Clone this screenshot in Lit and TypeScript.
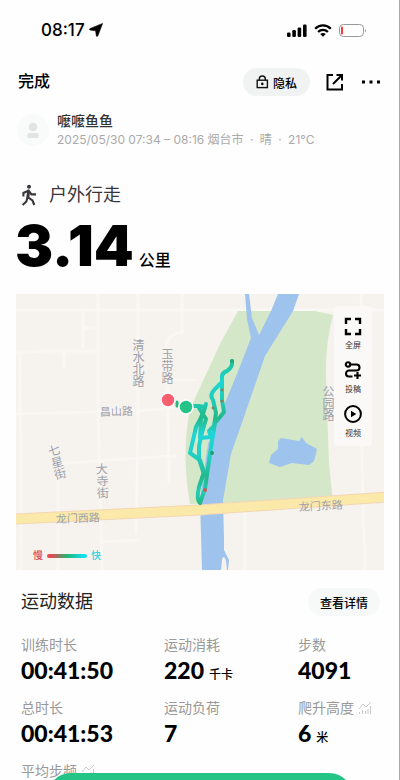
import { LitElement, html, svg, css } from "lit";
import { customElement, property } from "lit/decorators.js";

interface Metric {
  label: string;
  value?: string;
  unit?: string;
  chart?: boolean;
}

const METRICS: Metric[] = [
  { label: "训练时长", value: "00:41:50" },
  { label: "运动消耗", value: "220", unit: "千卡" },
  { label: "步数", value: "4091" },
  { label: "总时长", value: "00:41:53" },
  { label: "运动负荷", value: "7" },
  { label: "爬升高度", value: "6", unit: "米", chart: true },
  { label: "平均步频", chart: true },
];

const SANS = css`"Liberation Sans", "Noto Sans CJK SC", sans-serif`;

@customElement("status-bar")
export class StatusBar extends LitElement {
  static styles = css`
    :host {
      display: flex;
      align-items: center;
      justify-content: space-between;
      height: 60px;
      padding: 0 32px 0 41px;
      font: 500 17px/20px Inter, sans-serif;
      color: #000;
    }
    .side {
      display: flex;
      align-items: center;
      gap: 4px;
    }
    .icons {
      gap: 7px;
    }
    svg {
      display: block;
    }
  `;
  render() {
    return html`
      <div class="side">
        <span>08:17</span>
        <svg width="14" height="14" viewBox="0 0 14 14" aria-hidden="true">
          <path d="M13.6 .4 L8.8 13 Q8.1 14 7.4 13 L6.6 7.8 L1 7 Q-.2 6.4 .8 5.7 Z" stroke="#000" stroke-width=".6" stroke-linejoin="round" />
        </svg>
      </div>
      <div class="side icons">
        <svg width="20" height="13" viewBox="0 0 20 13" aria-hidden="true">
          <rect x="0" y="8.5" width="3.6" height="4.5" rx="1.2" />
          <rect x="5.3" y="6" width="3.6" height="7" rx="1.2" />
          <rect x="10.6" y="3.5" width="3.6" height="9.5" rx="1.2" />
          <rect x="16" y=".5" width="3.6" height="12.5" rx="1.2" />
        </svg>
        <svg width="18" height="13" viewBox="0 0 18 13" aria-hidden="true">
          <g fill="none" stroke="#000" stroke-width="2.3">
            <path d="M1.2 4.8 C5.6 .3 12.4 .3 16.8 4.8" />
            <path d="M4.1 8 C6.9 5.2 11.1 5.2 13.9 8" />
          </g>
          <path d="M9 12.8 L6.2 10 Q9 7.8 11.8 10 Z" />
        </svg>
        <svg width="28" height="13" viewBox="0 0 28 13" aria-hidden="true">
          <rect x=".5" y=".5" width="24" height="12" rx="3.8" fill="none" stroke="#999" />
          <rect x="2" y="2.5" width="2" height="8" rx="1" fill="#f23a3c" />
          <path d="M26 4.5 Q27.8 6.5 26 8.5 Z" fill="#999" />
        </svg>
      </div>
    `;
  }
}

@customElement("route-map")
export class RouteMap extends LitElement {
  static styles = css`
    :host {
      display: block;
      position: relative;
      background: #f6f2ed;
    }
    .map {
      display: block;
      width: 100%;
      height: auto;
    }
    .minor {
      fill: none;
      stroke: #f9f7f3;
      stroke-width: 3;
    }
    .water {
      fill: #9ec3ec;
    }
    .park {
      fill: #d5e7c9;
    }
    .place {
      font: 400 11px ${SANS};
      fill: #9da1ab;
    }
    .column {
      writing-mode: vertical-rl;
      font-size: 12px;
    }
    .track {
      fill: none;
      stroke-width: 4;
      stroke-linecap: round;
      stroke-linejoin: round;
    }
    .tools {
      position: absolute;
      top: 12px;
      right: 12px;
      width: 38px;
      padding: 10px 0 6px;
      border-radius: 4px;
      background: #fbf9f7;
      display: flex;
      flex-direction: column;
      gap: 8px;
    }
    .tool {
      display: flex;
      flex-direction: column;
      align-items: center;
      gap: 4px;
      padding: 0;
      border: 0;
      background: none;
      color: #333;
      font: 400 8px/12px ${SANS};
      height: 36px;
    }
    .legend {
      position: absolute;
      left: 17px;
      bottom: 6px;
      display: flex;
      align-items: center;
      gap: 4px;
      font: 500 10px/16px ${SANS};
    }
    .slow {
      color: #d9474f;
    }
    .fast {
      color: #35d3e0;
    }
    .scale {
      width: 40px;
      height: 4px;
      border-radius: 2px;
      background: linear-gradient(90deg, #e8484f 10%, #22b573 50%, #16e0f0 90%);
    }
  `;
  render() {
    return html`
      <svg class="map" viewBox="0 0 368 276" role="img" aria-label="运动轨迹地图">
        <defs>
          <linearGradient id="pace" gradientUnits="userSpaceOnUse" x1="0" y1="66" x2="0" y2="210">
            <stop offset="0" stop-color="#22bf92" />
            <stop offset=".15" stop-color="#1dd6d2" />
            <stop offset=".3" stop-color="#20c9b4" />
            <stop offset=".4" stop-color="#22b98a" />
            <stop offset=".52" stop-color="#20d5d8" />
            <stop offset=".66" stop-color="#22cfc4" />
            <stop offset=".82" stop-color="#22b98a" />
            <stop offset=".92" stop-color="#20cdb8" />
            <stop offset="1" stop-color="#22b77c" />
          </linearGradient>
        </defs>
        ${svg`
        <rect width="368" height="276" fill="#f6f2ed" />
        <g class="minor">
          <path d="M0 16 H368" />
          <path d="M67 16 V54 M67 34 H82 M0 59 L28 57 H82 M48 57 V74" />
          <path d="M82 0 V118 L86 276" />
          <path d="M122 0 V130 L120 240" />
          <path d="M166 0 V38 Q152 40 151 50 L153 190" />
          <path d="M0 120 L120 117 L180 112 M40 170 L122 164 L160 162" />
          <path d="M4 60 L5 276 M42 165 V276 M86 248 L124 246" />
          <path d="M229 210 V276 M345 0 L346 170 L349 276" />
          <path d="M150 86 H180" />
        </g>
        <path class="park" d="M222 17 L299 17 L317 21 Q309 50 310 85 L313 170 L317 208 L174 210 Q165 160 174 115 L205 48 Z" />
        <path class="water" d="M229 0 L233 0 L236 24 L243 41 L255 17 L262 0 L283 0 L277 17 L249 62 L229 120 L215 160 L207 206 L208 244 L208 256 L213 266 L212 276 L186 276 L184 205 L192 150 L221 80 L235 44 L231 25 Z" />
        <path class="water" d="M262 147 L265 144 L283 147 L286 143 L290 149 L301 155 L298 167 L293 171 L276 169 L264 173 L253 169 L255 161 L262 155 Z" />
        <path d="M205 276 L206 265 Q208 260 210 267 L211 276 Z" fill="#f6f2ed" />
        <path d="M-2 225 L184 216 L370 203" fill="none" stroke="#f3d6b4" stroke-width="11" />
        <path d="M-2 225 L184 216 L370 203" fill="none" stroke="#fae9a9" stroke-width="9" />
        <g class="place">
          <text class="column" x="121" y="45">清水北路</text>
          <text class="column" x="150" y="54">玉带路</text>
          <text class="column" x="311" y="91">公园路</text>
          <text class="column" x="84" y="169" transform="rotate(-3 84 169)">大寺街</text>
          <text class="column" x="35" y="151" transform="rotate(-15 35 151)">七星街</text>
          <text x="84" y="122" transform="rotate(-2 84 122)">昌山路</text>
          <text x="40" y="229" transform="rotate(-2 40 229)">龙门西路</text>
          <text x="283" y="217" transform="rotate(-3 283 217)">龙门东路</text>
        </g>
        <g class="track" stroke="url(#pace)">
          <path d="M216 67 Q217 73 211 77 Q205 79 206 85 L206 106 L208 118 L199 129 L194 160 L189 195 L184 209 Q180 206 183 193 L188 178 L184 166 L174 159 L180 133 L187 120 L190 110" />
          <path d="M206 88 L199 95 Q193 101 197 106 L200 119 L198 132 L193 137 L195 143 L184 144 L185 124 L189 113 L183 112 L172 112" />
          <path d="M183 114 L190 125 L186 139 L183 152 L183 165 L188 180" />
        </g>
        <g fill="#d45b50">
          <circle cx="189" cy="196" r="2" />
          <circle cx="206" cy="107" r="1.6" fill="#8c7f54" />
          <circle cx="206" cy="96" r="1.4" fill="#8c7f54" />
          <circle cx="197" cy="114" r="1.4" fill="#8c7f54" />
          <circle cx="196" cy="159" r="2" fill="#1f9f70" />
          <circle cx="216" cy="67" r="2" fill="#22a77a" />
        </g>
        <path d="M161 108 V112" stroke="#22b97f" stroke-width="3" stroke-linecap="round" />
        <circle cx="152" cy="106" r="7" fill="#fb5f6e" stroke="#fff" stroke-width="1.5" />
        <circle cx="170" cy="113" r="7" fill="#24c486" stroke="#fff" stroke-width="1.5" />
        `}
      </svg>
      <div class="tools">
        <button class="tool">
          <svg width="18" height="20" viewBox="0 0 18 20" fill="none" stroke="#000" stroke-width="2.4">
            <path d="M2 8 V3 H7 M11 3 H16 V8 M16 13 V18 H11 M7 18 H2 V13" />
          </svg>
          全屏
        </button>
        <button class="tool">
          <svg width="18" height="20" viewBox="0 0 18 20" fill="none" stroke="#000" stroke-width="2.1">
            <circle cx="4" cy="4.5" r="2.2" />
            <path d="M6.2 4.5 H12.5 A3 3 0 0 1 12.5 10.5 H5 A3 3 0 0 0 5 16.5 H8.5" />
            <path d="M13.5 12 V19 M10 15.5 H17" />
          </svg>
          投稿
        </button>
        <button class="tool">
          <svg width="18" height="20" viewBox="0 0 18 20">
            <circle cx="9" cy="10" r="7.9" fill="none" stroke="#000" stroke-width="2" />
            <path d="M7 6.8 V13.2 L12.3 10 Z" />
          </svg>
          视频
        </button>
      </div>
      <div class="legend">
        <span class="slow">慢</span><span class="scale"></span><span class="fast">快</span>
      </div>
    `;
  }
}

@customElement("metric-item")
export class MetricItem extends LitElement {
  @property({ attribute: false }) metric!: Metric;
  static styles = css`
    :host {
      display: block;
      font-family: ${SANS};
      white-space: nowrap;
    }
    .label {
      display: flex;
      align-items: center;
      gap: 4px;
      font-size: 14px;
      line-height: 20px;
      color: #999;
    }
    .line {
      display: flex;
      align-items: baseline;
      gap: 5px;
      color: #000;
    }
    .value {
      font: 900 23px/30px Lato, sans-serif;
    }
    .unit {
      font-size: 12px;
      font-weight: 500;
      line-height: 16px;
    }
  `;
  render() {
    const m = this.metric;
    return html`
      <div class="label">
        ${m.label}
        ${m.chart
          ? html`<svg width="14" height="14" viewBox="0 0 14 14" fill="none" stroke="#c8c8c8" aria-hidden="true">
              <path d="M1 8 L5 3 L8 6 L13 1" />
              <path d="M1.5 11 V13 M4.5 9 V13 M7.5 10 V13 M10 8 V13 M12.5 5 V13" />
            </svg>`
          : null}
      </div>
      ${m.value
        ? html`<div class="line">
            <span class="value">${m.value}</span>${m.unit ? html`<span class="unit">${m.unit}</span>` : null}
          </div>`
        : null}
    `;
  }
}

@customElement("app-root")
export class AppRoot extends LitElement {
  static styles = css`
    :host {
      display: block;
      position: relative;
      box-sizing: border-box;
      height: 100vh;
      overflow: hidden;
      background: #fefefe;
      border-right: 1px solid #a9a9a9;
      font-family: ${SANS};
      color: #000;
    }
    button {
      border: 0;
      margin: 0;
      padding: 0;
      background: none;
      color: inherit;
      font-family: inherit;
    }
    svg {
      display: block;
      flex: none;
    }
    .bar {
      display: flex;
      align-items: center;
      justify-content: space-between;
      padding: 8px 17px 0 18px;
    }
    .done {
      font-size: 16px;
      font-weight: 500;
      line-height: 24px;
    }
    .actions {
      display: flex;
      align-items: center;
      gap: 16px;
    }
    .pill {
      display: flex;
      align-items: center;
      justify-content: center;
      gap: 4px;
      height: 28px;
      border-radius: 14px;
      padding: 0 13px;
      background: #f1f2f2;
      font-size: 12px;
      font-weight: 500;
    }
    .user {
      display: flex;
      align-items: center;
      gap: 8px;
      padding: 15px 16px 0 17px;
    }
    .who {
      min-width: 0;
    }
    .name {
      font-size: 14px;
      font-weight: 500;
      line-height: 20px;
      color: #333;
    }
    .when {
      font: 400 12px/18px Inter, "Noto Sans CJK SC", sans-serif;
      color: #aaa;
      white-space: nowrap;
    }
    .dot {
      margin: 0 3px;
    }
    .sport {
      display: flex;
      align-items: center;
      gap: 10px;
      margin: 0;
      padding: 32px 20px 0;
      font-size: 18px;
      font-weight: 400;
      line-height: 28px;
      color: #3a363c;
    }
    .distance {
      display: flex;
      align-items: baseline;
      gap: 5px;
      padding: 7px 15px 0;
    }
    .km {
      font: 900 57px/60px Inter, sans-serif;
    }
    .km-unit {
      font-size: 16px;
      font-weight: 500;
      line-height: 24px;
    }
    route-map {
      margin: 18px 15px 0 16px;
    }
    .head {
      display: flex;
      align-items: center;
      justify-content: space-between;
      padding: 18px 19px 0 21px;
    }
    h2 {
      margin: 0;
      font-size: 18px;
      font-weight: 400;
      line-height: 28px;
      color: #222;
    }
    .pill.soft {
      background: #f7f8f8;
      padding: 0 12px;
    }
    .grid {
      display: grid;
      grid-template-columns: 143fr 134fr 101fr;
      row-gap: 13px;
      padding: 19px 0 0 21px;
    }
    .cta {
      position: absolute;
      left: 47px;
      right: 46px;
      bottom: -41px;
      height: 48px;
      border-radius: 24px;
      background: #24c486;
    }
  `;
  render() {
    return html`
      <status-bar></status-bar>
      <header class="bar">
        <button class="done">完成</button>
        <div class="actions">
          <button class="pill">
            <svg width="13" height="14" viewBox="0 0 13 14" fill="none" stroke="#111" stroke-width="1.4" aria-hidden="true">
              <rect x="1.2" y="5.2" width="10.2" height="7.4" />
              <path d="M3.3 5 V4 A3 3 0 0 1 9.3 4 V5" />
              <circle cx="6.3" cy="8.9" r=".6" fill="#111" />
            </svg>
            隐私
          </button>
          <button aria-label="分享">
            <svg width="18" height="18" viewBox="0 0 18 18" fill="none" stroke="#000" stroke-width="2">
              <path d="M7 2 H1.5 V16.5 H16 V11 M10.5 2 H16 V7.5 M16 2 L7 11" />
            </svg>
          </button>
          <button aria-label="更多">
            <svg width="22" height="18" viewBox="0 0 22 18">
              <path d="M2 7.5 h3 v3 h-3 Z M9.5 7.5 h3 v3 h-3 Z M17 7.5 h3 v3 h-3 Z" />
            </svg>
          </button>
        </div>
      </header>
      <section class="user">
        <svg width="32" height="32" viewBox="0 0 32 32" aria-hidden="true">
          <circle cx="16" cy="16" r="16" fill="#f9fafa" />
          <circle cx="16" cy="13" r="4.3" fill="#e1e4e4" />
          <rect x="10" y="19" width="12" height="5" rx="2.5" fill="#e1e4e4" />
        </svg>
        <div class="who">
          <div class="name">嚒嚒鱼鱼</div>
          <div class="when">
            2025/05/30 07:34 – 08:16 烟台市 <span class="dot">·</span> 晴 <span class="dot">·</span> 21°C
          </div>
        </div>
      </section>
      <h1 class="sport">
        <svg width="19" height="22" viewBox="0 0 19 22" fill="none" stroke="#3a363c" stroke-width="2.1" aria-hidden="true">
          <circle cx="9" cy="2.8" r="2" fill="#3a363c" stroke="none" />
          <path d="M8.5 6 L7.6 13 L12.5 16.5 L14.3 21 M7.4 13.5 L6.4 17.5 L2.6 21 M3.4 12.5 V9 L8.6 6.5 L11.4 10.4 H16" />
          <path d="M7 6.5 h3 l-.6 7 h-2.8 Z" fill="#3a363c" stroke="none" />
        </svg>
        户外行走
      </h1>
      <div class="distance"><span class="km">3.14</span><span class="km-unit">公里</span></div>
      <route-map></route-map>
      <section>
        <div class="head">
          <h2>运动数据</h2>
          <button class="pill soft">查看详情</button>
        </div>
        <div class="grid">
          ${METRICS.map((m) => html`<metric-item .metric=${m}></metric-item>`)}
        </div>
      </section>
      <button class="cta" aria-label="继续"></button>
    `;
  }
}
